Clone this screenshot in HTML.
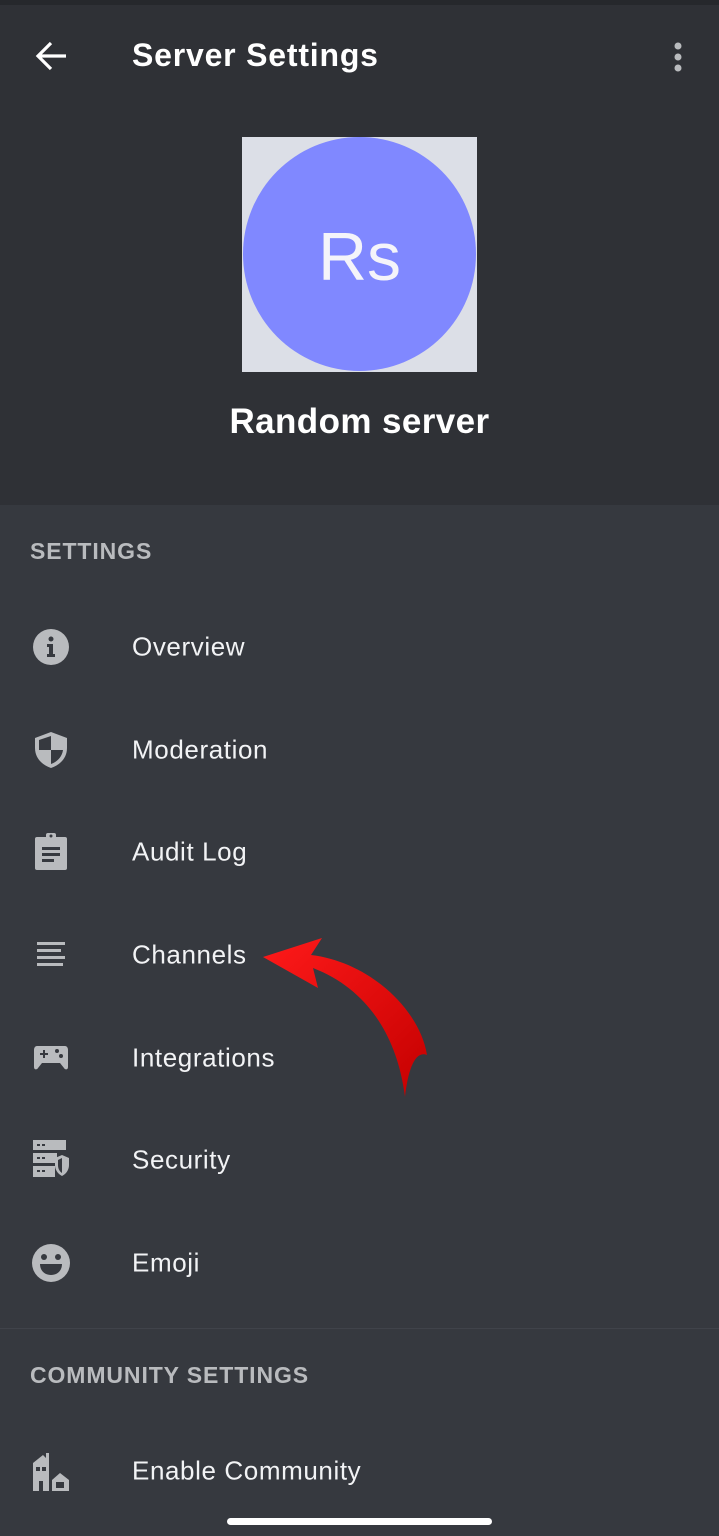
<!DOCTYPE html>
<html><head><meta charset="utf-8"><style>
*{margin:0;padding:0;box-sizing:border-box}
body{width:719px;height:1536px;background:#36393f;font-family:"Liberation Sans","DejaVu Sans",sans-serif;position:relative;overflow:hidden;color:#fff}
.hdr{position:absolute;left:0;top:0;width:719px;height:505px;background:#2f3136}
.strip{position:absolute;left:0;top:0;width:719px;height:5px;background:#26282c}
.title{position:absolute;left:132px;top:37px;font-size:32px;font-weight:bold;color:#fff;letter-spacing:0.8px}
.sq{position:absolute;left:242px;top:137px;width:235px;height:235px;background:#dcdfe7}
.circ{position:absolute;left:243px;top:137px;width:233px;height:234px;border-radius:50%;background:#8088ff;color:#f4f4fa;font-size:68px;text-align:center;line-height:240px}
.name{position:absolute;left:0;width:719px;top:402px;text-align:center;font-size:35px;font-weight:bold;color:#fff;letter-spacing:0.4px}
.sec{position:absolute;left:30px;font-size:23px;font-weight:bold;color:#b9bbbe;letter-spacing:0.9px}
.it{position:absolute;left:132px;font-size:26px;color:#f2f3f5;transform:translateY(-50%);letter-spacing:0.6px}
.ic{position:absolute;left:31px;width:40px;height:40px;transform:translateY(-50%)}
.sep{position:absolute;left:0;top:1328px;width:719px;height:1px;background:#40434a}
.bar{position:absolute;left:227px;top:1518px;width:265px;height:7px;border-radius:4px;background:#fff}
</style></head><body>
<div class="hdr"></div><div class="strip"></div>
<svg style="position:absolute;left:34px;top:40px" width="34" height="32" viewBox="0 0 34 32"><path d="M32 16H4M17 3L4 16L17 29" stroke="#fff" stroke-width="3.2" fill="none"/></svg>
<div class="title">Server Settings</div>
<svg style="position:absolute;left:671px;top:41px" width="14" height="32"><circle cx="7" cy="5" r="3.5" fill="#b9bbbe"/><circle cx="7" cy="16" r="3.5" fill="#b9bbbe"/><circle cx="7" cy="27" r="3.5" fill="#b9bbbe"/></svg>
<div class="sq"></div><div class="circ">Rs</div>
<div class="name">Random server</div>
<div class="sec" style="top:538px">SETTINGS</div>

<svg class="ic" style="top:647px" viewBox="0 0 40 40"><circle cx="20" cy="20" r="18" fill="#b9bbbe"/><circle cx="20" cy="12" r="2.5" fill="#36393f"/><path d="M16 17h6v10h2v3h-8v-3h2v-7h-2z" fill="#36393f"/></svg>
<div class="it" style="top:647px">Overview</div>

<svg class="ic" style="top:750px" viewBox="0 0 40 40"><path d="M20 2L4 8v10c0 10 7 17 16 20c9-3 16-10 16-20V8z" fill="#b9bbbe"/><path d="M20 6v14H8V10zM20 20h12c-1 7-6 12-12 14z" fill="#36393f"/></svg>
<div class="it" style="top:750px">Moderation</div>

<svg class="ic" style="top:852px" viewBox="0 0 40 40"><rect x="4" y="5" width="32" height="33" rx="2" fill="#b9bbbe"/><rect x="15" y="1" width="10" height="7" rx="2" fill="#b9bbbe"/><circle cx="20" cy="4" r="1.5" fill="#36393f"/><rect x="11" y="15" width="18" height="3" fill="#36393f"/><rect x="11" y="21" width="18" height="3" fill="#36393f"/><rect x="11" y="27" width="12" height="3" fill="#36393f"/></svg>
<div class="it" style="top:852px">Audit Log</div>

<svg class="ic" style="top:955px" viewBox="0 0 40 40"><rect x="6" y="7" width="28" height="3" fill="#b9bbbe"/><rect x="6" y="14" width="24" height="3" fill="#b9bbbe"/><rect x="6" y="21" width="28" height="3" fill="#b9bbbe"/><rect x="6" y="28" width="26" height="3" fill="#b9bbbe"/></svg>
<div class="it" style="top:955px">Channels</div>

<svg class="ic" style="top:1058px" viewBox="0 0 40 40"><path d="M6 8h28c2 0 3 2 3 4v17c0 3-3 3-4 1l-4-5H11l-4 5c-1 2-4 2-4-1V12c0-2 1-4 3-4z" fill="#b9bbbe"/><path d="M9 15h3v-3h2v3h3v2h-3v3h-2v-3H9z" fill="#36393f"/><circle cx="26" cy="13" r="2" fill="#36393f"/><circle cx="30" cy="18" r="2" fill="#36393f"/></svg>
<div class="it" style="top:1058px">Integrations</div>

<svg class="ic" style="top:1160px" viewBox="0 0 40 40"><rect x="2" y="0" width="33" height="10" fill="#b9bbbe"/><rect x="2" y="13" width="24" height="10" fill="#b9bbbe"/><rect x="2" y="26" width="22" height="11" fill="#b9bbbe"/><path d="M31 15l-7 3v7c0 5 3 9 7 11c4-2 7-6 7-11v-7z" fill="#b9bbbe"/><path d="M31 18v15c-3-2-4-5-4-8v-5z" fill="#36393f"/><rect x="6" y="4" width="3" height="2" fill="#36393f"/><rect x="11" y="4" width="3" height="2" fill="#36393f"/><rect x="6" y="17" width="3" height="2" fill="#36393f"/><rect x="11" y="17" width="3" height="2" fill="#36393f"/><rect x="6" y="30" width="3" height="2" fill="#36393f"/><rect x="11" y="30" width="3" height="2" fill="#36393f"/></svg>
<div class="it" style="top:1160px">Security</div>

<svg class="ic" style="top:1263px" viewBox="0 0 40 40"><circle cx="20" cy="20" r="19" fill="#b9bbbe"/><circle cx="13" cy="14" r="3" fill="#36393f"/><circle cx="27" cy="14" r="3" fill="#36393f"/><path d="M9 21h22c0 7-5 11-11 11S9 28 9 21z" fill="#36393f"/></svg>
<div class="it" style="top:1263px">Emoji</div>

<div class="sep"></div>
<div class="sec" style="top:1362px">COMMUNITY SETTINGS</div>
<svg class="ic" style="top:1471px" viewBox="0 0 40 40"><path d="M2 40V12l10-8l3 3V2h3v10v28h-6V30h-4v10z" fill="#b9bbbe"/><rect x="5" y="16" width="4" height="4" fill="#36393f"/><rect x="11" y="16" width="4" height="4" fill="#36393f"/><path d="M21 40V29l8-7l9 7v11z" fill="#b9bbbe"/><rect x="25" y="31" width="8" height="6" fill="#36393f"/></svg>
<div class="it" style="top:1471px">Enable Community</div>

<svg style="position:absolute;left:0;top:0" width="719" height="1536"><defs><linearGradient id="g" x1="0" y1="0" x2="1" y2="1"><stop offset="0" stop-color="#ff1a1a"/><stop offset="1" stop-color="#c40000"/></linearGradient></defs>
<path d="M263 957L322 938L311 955C370 962 420 1010 427 1055C415 1050 408 1070 405 1097C398 1040 370 990 313 968L318 988Z" fill="url(#g)"/></svg>
<div class="bar"></div>
</body></html>
